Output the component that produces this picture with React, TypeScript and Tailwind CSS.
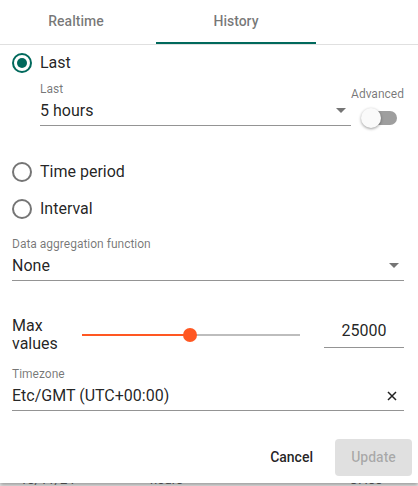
import { useState } from "react";

function Radio({ checked, label }: { checked?: boolean; label: string }) {
	return (
		<div className="flex h-[36px] items-center gap-[8px] pl-[12px]">
			<span
				className={`flex h-[20px] w-[20px] items-center justify-center rounded-full border-2 ${
					checked ? "border-[#00695c]" : "border-[#757575]"
				}`}
			>
				{checked && <span className="h-[10px] w-[10px] rounded-full bg-[#00695c]" />}
			</span>
			<span className="text-[16px] text-[#000000de]">{label}</span>
		</div>
	);
}

function Caret() {
	return (
		<svg width="10" height="5" viewBox="0 0 10 5" className="shrink-0">
			<path d="M0 0 L5 5 L10 0 Z" fill="#757575" />
		</svg>
	);
}

function SelectField({ label, value }: { label: string; value: string }) {
	return (
		<div className="flex flex-col">
			<span className="text-[12px] leading-[14px] text-[#0000008a]">{label}</span>
			<div className="flex h-[30px] items-center justify-between border-b border-[#0000006b] pr-[5px]">
				<span className="text-[16px] text-[#000000de]">{value}</span>
				<Caret />
			</div>
		</div>
	);
}

export default function App() {
	const [tab] = useState("History");
	const tabs = ["Realtime", "History"];

	return (
		<div className="relative h-[486px] w-[418px] overflow-hidden bg-[#e9e9e9] font-['Roboto',sans-serif]">
			<div className="relative z-10 h-[483px] bg-white shadow-[0_2px_4px_rgba(0,0,0,0.35)]">
				<div className="flex h-[45px] border-b border-[#e0e0e0]">
					<div className="ml-[-4px] flex">
						{tabs.map((t) => (
							<div
								key={t}
								className={`flex h-[44px] w-[160px] items-center justify-center border-b-2 pt-[1px] text-[14px] font-medium text-[#0000008a] ${
									tab === t ? "border-[#00695c]" : "border-transparent"
								}`}
							>
								{t}
							</div>
						))}
					</div>
				</div>

				<div className="flex flex-col pl-[12px] pr-[14px]">
					<div className="-ml-[12px]">
						<Radio checked label="Last" />
					</div>
					<div className="ml-[28px] flex items-end">
						<div className="flex-1 pt-[1px]">
							<SelectField label="Last" value="5 hours" />
						</div>
						<div className="mb-[-2px] flex w-[53px] flex-col items-center">
							<span className="text-[12px] leading-[14px] text-[#0000008a]">Advanced</span>
							<div className="relative mt-[7px] h-[20px] w-[36px]">
								<div className="absolute left-[3px] top-[3px] h-[14px] w-[34px] rounded-full bg-[#9e9e9e]" />
								<div className="absolute left-[1px] top-0 h-[20px] w-[20px] rounded-full bg-[#fafafa] shadow-[0_1px_3px_rgba(0,0,0,0.4)]" />
							</div>
						</div>
					</div>

					<div className="-ml-[12px] mt-[28px]">
						<Radio label="Time period" />
						<div className="h-[1px]" />
						<Radio label="Interval" />
					</div>

					<div className="mt-[10px]">
						<SelectField label="Data aggregation function" value="None" />
					</div>

					<div className="mt-[36px] flex items-center">
						<span className="w-[70px] text-[16px] leading-[18px] text-[#000000de]">
							Max
							<br />
							values
						</span>
						<div className="relative flex h-[20px] w-[218px] items-center">
							<div className="h-[2px] w-[108px] bg-[#ff5722]" />
							<div className="h-[2px] flex-1 bg-[#bdbdbd]" />
							<div className="absolute left-[101px] top-[3px] h-[14px] w-[14px] rounded-full bg-[#ff5722]" />
						</div>
						<div className="mb-[4px] ml-auto flex h-[30px] w-[80px] items-center justify-center border-b border-[#0000006b] pb-[3px]">
							<span className="text-[16px] text-[#000000de]">25000</span>
						</div>
					</div>

					<div className="mt-[14px] flex flex-col">
						<span className="text-[12px] leading-[14px] text-[#0000008a]">Timezone</span>
						<div className="flex h-[30px] items-center justify-between border-b border-[#0000006b] pr-[7px]">
							<span className="text-[16px] text-[#000000de]">Etc/GMT (UTC+00:00)</span>
							<svg width="10" height="10" viewBox="0 0 10 10">
								<path d="M1 1 L9 9 M9 1 L1 9" stroke="#000000de" strokeWidth="1.5" fill="none" />
							</svg>
						</div>
					</div>

					<div className="mr-[-8px] mt-[28px] flex items-center justify-end gap-[22px]">
						<span className="text-[14px] font-medium text-[#000000de]">Cancel</span>
						<button
							type="button"
							className="h-[37px] w-[77px] rounded-[4px] bg-[#e0e0e0] text-[14px] font-medium text-[#00000042]"
						>
							Update
						</button>
					</div>
				</div>
			</div>
			<div className="flex h-[3px] items-start overflow-hidden px-[20px] text-[13px] leading-[10px] text-[#606060]">
				<span className="-mt-[8px] w-[130px]">10/11/24</span>
				<span className="-mt-[8px] w-[200px]">hours</span>
				<span className="-mt-[8px]">87.00</span>
			</div>
		</div>
	);
}
